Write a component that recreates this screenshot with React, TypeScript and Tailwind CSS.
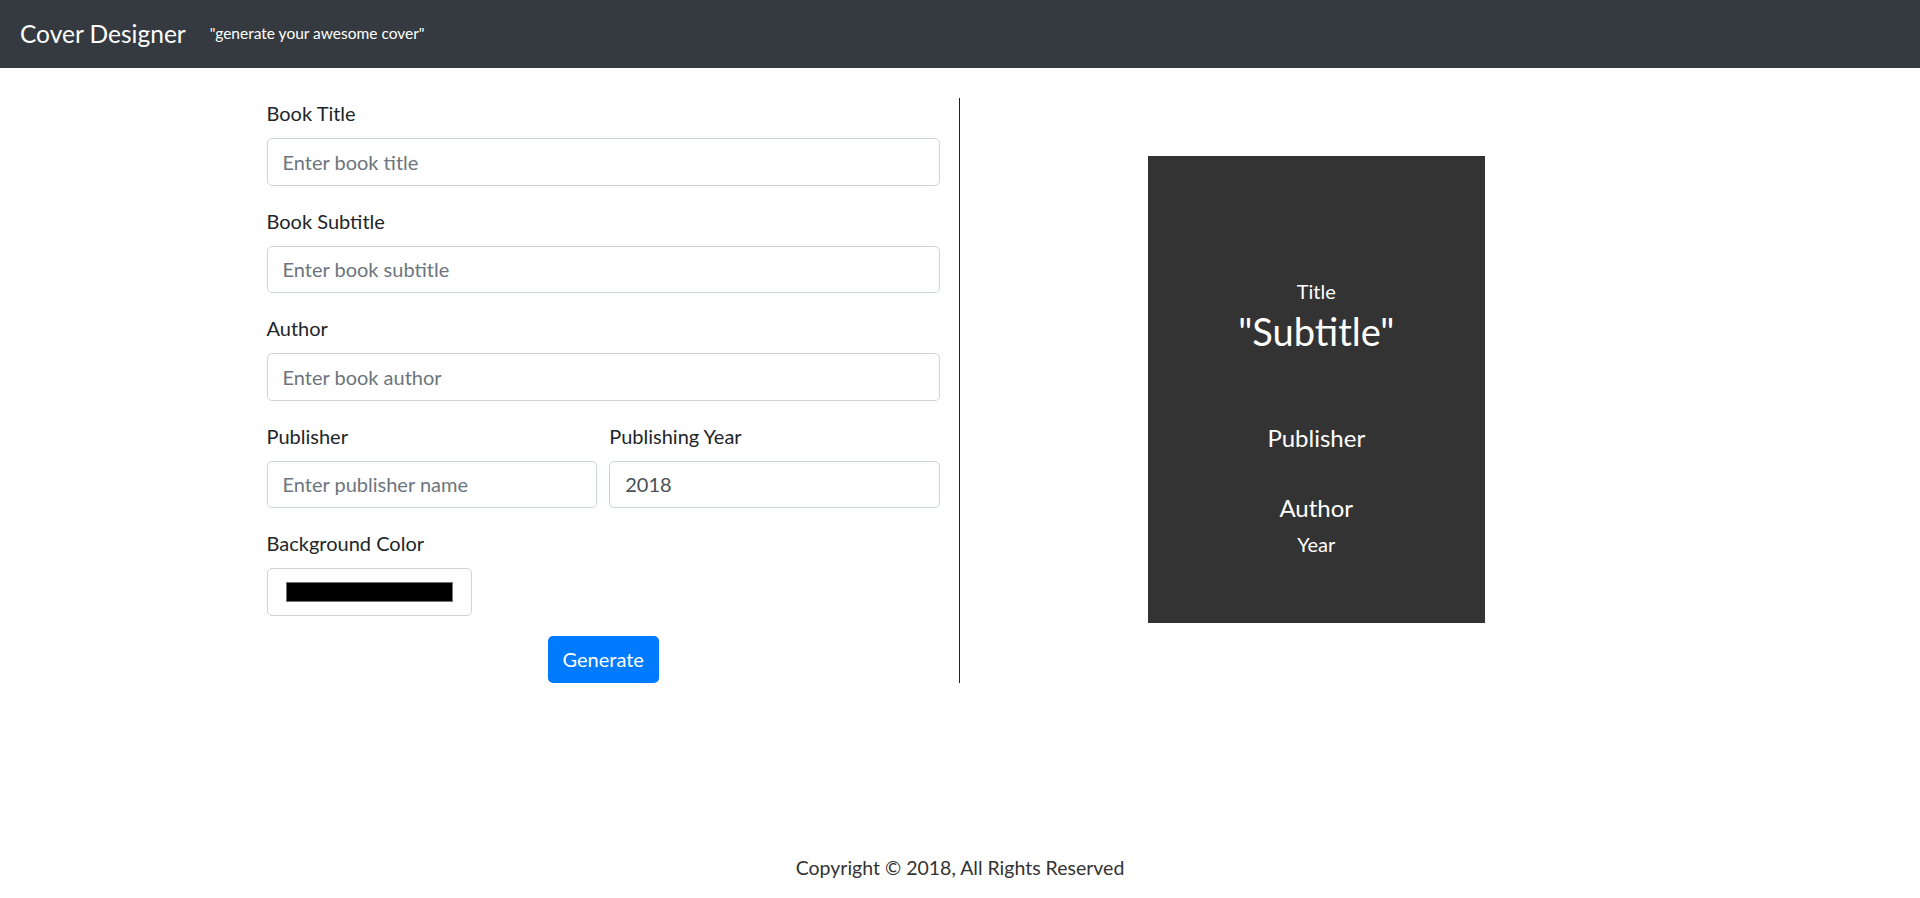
import { useState } from "react";

/* Cover designer: form on the left, live preview of the cover on the right. */

const font = { fontFamily: "Lato, 'Liberation Sans', sans-serif" };

function Field({
  label,
  placeholder,
  value,
  onChange,
}: {
  label: string;
  placeholder: string;
  value: string;
  onChange: (v: string) => void;
}) {
  return (
    <div className="mb-[20px] flex flex-col">
      <label className="mb-[10px] text-[20px] leading-[30px] text-[#212529]">{label}</label>
      <input
        type="text"
        value={value}
        placeholder={placeholder}
        onChange={(e) => onChange(e.target.value)}
        className="h-[47.5px] w-full rounded-[5px] border border-[#ced4da] bg-white px-[15px] text-[20px] text-[#495057] placeholder:text-[#6c757d] focus:outline-none"
      />
    </div>
  );
}

export default function App() {
  const [title, setTitle] = useState("");
  const [subtitle, setSubtitle] = useState("");
  const [author, setAuthor] = useState("");
  const [publisher, setPublisher] = useState("");
  const [year, setYear] = useState("2018");

  return (
    <div className="flex h-screen flex-col bg-white" style={font}>
      <nav className="flex h-[68px] shrink-0 items-center bg-[#343a40] px-[20px] text-white">
        <span className="text-[24.5px] leading-[36px]">Cover Designer</span>
        <span className="ml-[24px] text-[15.5px]">"generate your awesome cover"</span>
      </nav>

      <main className="flex-1">
        <div className="mx-auto mt-[30px] flex w-[1425px]">
          <div className="w-1/2 border-r border-[#222] px-[19px]">
            <Field label="Book Title" placeholder="Enter book title" value={title} onChange={setTitle} />
            <Field label="Book Subtitle" placeholder="Enter book subtitle" value={subtitle} onChange={setSubtitle} />
            <Field label="Author" placeholder="Enter book author" value={author} onChange={setAuthor} />
            <div className="flex gap-[12px]">
              <div className="flex-1">
                <Field label="Publisher" placeholder="Enter publisher name" value={publisher} onChange={setPublisher} />
              </div>
              <div className="flex-1">
                <Field label="Publishing Year" placeholder="Enter year" value={year} onChange={setYear} />
              </div>
            </div>
            <div className="mb-[20px] flex flex-col">
              <label className="mb-[10px] text-[20px] leading-[30px] text-[#212529]">Background Color</label>
              <div className="flex h-[47.5px] w-[205px] items-center rounded-[5px] border border-[#ced4da] bg-white px-[18px]">
                <div className="h-[20px] w-full border border-[#777] bg-black" />
              </div>
            </div>
            <div className="flex justify-center">
              <button className="h-[47.5px] rounded-[5px] bg-[#007bff] px-[15px] text-[20px] text-white">
                Generate
              </button>
            </div>
          </div>

          <div className="flex w-1/2 items-center justify-center pb-[2px]">
            <div className="flex h-[467px] w-[337px] flex-col items-center bg-[#333333] pt-[120px] text-white">
              <div className="text-[20px] leading-[30px]">{title || "Title"}</div>
              <div className="mt-[2px] text-[38px] leading-[46px]">"{subtitle || "Subtitle"}"</div>
              <div className="mt-[69px] text-[24px] leading-[29px]">{publisher || "Publisher"}</div>
              <div className="mt-[41px] text-[24px] leading-[29px]">{author || "Author"}</div>
              <div className="mt-[7px] text-[20px] leading-[30px]">{year ? "Year" : "Year"}</div>
            </div>
          </div>
        </div>
      </main>

      <footer className="shrink-0 pb-[15px] text-center text-[19.5px] leading-[30px] text-[#333]">
        Copyright © 2018, All Rights Reserved
      </footer>
    </div>
  );
}
